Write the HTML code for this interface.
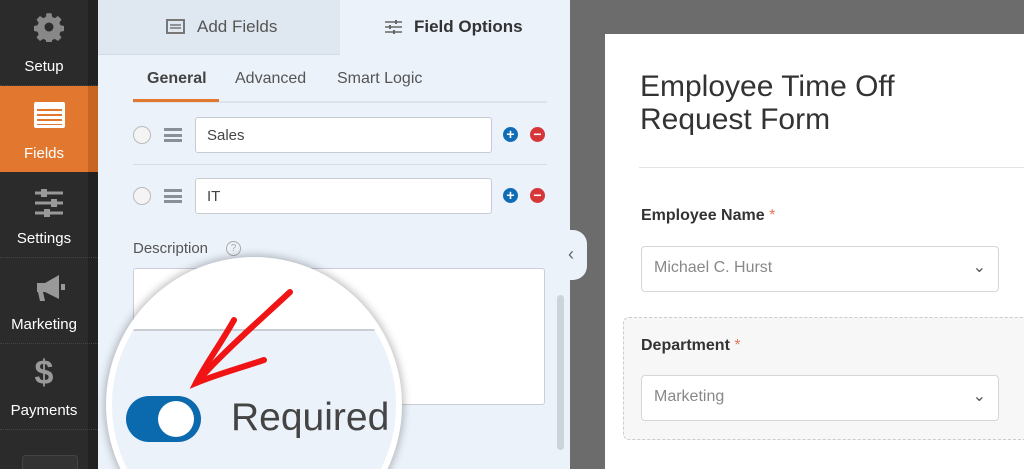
<!DOCTYPE html>
<html style="width:1024px;height:469px;overflow:hidden"><head><meta charset="utf-8"><style>
*{margin:0;padding:0;box-sizing:border-box}
body{width:1024px;height:469px;overflow:hidden;position:relative;background:#6c6c6c;font-family:"Liberation Sans","DejaVu Sans",sans-serif}
.abs{position:absolute}
.side{left:0;top:0;width:98px;height:469px;background:#2b2b2b;overflow:hidden}
.side .strip{position:absolute;left:88px;top:0;width:10px;height:469px;background:#222}
.item{position:absolute;left:0;width:98px;height:86px;border-bottom:1px dotted #444;color:#fff;font-size:15px;text-align:center}
.item span{position:absolute;left:0;right:10px;bottom:10px}
.panel{left:98px;top:0;width:472px;height:469px;background:#ebf2fa}
.tabA{left:98px;top:0;width:242px;height:55px;background:#dfe7f0;border-bottom:1px solid #d3dce6;color:#555;font-size:17px}
.tabB{left:340px;top:0;width:230px;height:55px;color:#333;font-size:17px;font-weight:bold}
.inp{background:#fff;border:1px solid #c7ccd1;border-radius:3px;font-size:15px;color:#444;padding-left:11px}
.radio{width:18px;height:18px;border-radius:50%;border:1px solid #bbb;background:#f4f4f4}
.ham{width:18px;height:14px;border-top:3px solid #8a9099;border-bottom:3px solid #8a9099}
.ham:after{content:"";position:absolute;left:0;right:0;top:2.5px;height:3px;background:#8a9099}
.pm{width:15px;height:15px;border-radius:50%;color:#fff;font-weight:bold;font-size:14px;line-height:14px;text-align:center}
.form{left:605px;top:34px;width:419px;height:435px;background:#fff;overflow:hidden}
.sel{border:1px solid #d6d6d6;border-radius:4px;background:#fff;color:#888;font-size:16px;padding:12px 0 0 12px}
</style></head><body>
<div class="abs side"><div class="strip"></div>
 <div class="item" style="top:0">
  <svg class="abs" style="left:34px;top:12px" width="30" height="30" viewBox="0 0 24 24"><path fill="#888" d="M12 8.5a3.5 3.5 0 1 0 0 7a3.5 3.5 0 1 0 0-7zM10 1h4l.6 3 2 .9 2.6-1.7 2.8 2.8-1.7 2.6.9 2 3 .6v4l-3 .6-.9 2 1.7 2.6-2.8 2.8-2.6-1.7-2 .9-.6 3h-4l-.6-3-2-.9-2.6 1.7-2.8-2.8 1.7-2.6-.9-2-3-.6v-4l3-.6.9-2-1.7-2.6 2.8-2.8 2.6 1.7 2-.9z"/><circle cx="12" cy="12" r="3.5" fill="#2b2b2b"/></svg>
  <span>Setup</span></div>
 <div class="item" style="top:86px;background:#e27730;border:0"><div class="abs" style="left:88px;top:0;width:10px;height:86px;background:#c96522"></div>
  <div class="abs" style="left:34px;top:16px;width:31px;height:26px;background:#fff;border-radius:2px"><div class="abs" style="left:3px;top:7px;width:25px;height:16px;background:repeating-linear-gradient(#e27730 0 2px,#fff 2px 5px)"></div></div>
  <span>Fields</span></div>
 <div class="item" style="top:172px">
  <svg class="abs" style="left:35px;top:16px" width="28" height="30" viewBox="0 0 28 30"><g stroke="#999" stroke-width="3"><path d="M0 5h28M0 15h28M0 25h28"/></g><g fill="#999"><rect x="6" y="1" width="6" height="8"/><rect x="16" y="11" width="6" height="8"/><rect x="9" y="21" width="6" height="8"/></g></svg>
  <span>Settings</span></div>
 <div class="item" style="top:258px">
  <svg class="abs" style="left:34px;top:14px" width="32" height="32" viewBox="0 0 32 32"><path fill="#999" d="M3 11h8l14-8v24l-14-7h-2l2 9h-5l-2-9H3z"/><rect x="27" y="12" width="4" height="6" fill="#999"/></svg>
  <span>Marketing</span></div>
 <div class="item" style="top:344px"><div class="abs" style="left:0;right:10px;top:10px;color:#999;font-size:34px;font-weight:bold">$</div><span>Payments</span></div>
 <div class="abs" style="left:22px;top:455px;width:56px;height:14px;border:1px solid #444;border-bottom:0;border-radius:4px 4px 0 0;background:#333"></div>
</div>
<div class="abs panel"></div>
<div class="abs tabA"><svg class="abs" style="left:68px;top:19px" width="19" height="15" viewBox="0 0 19 15"><rect x="1" y="1" width="17" height="13" fill="none" stroke="#777" stroke-width="2"/><path d="M4 6h11M4 9h11" stroke="#777" stroke-width="1.5"/></svg><div class="abs" style="left:99px;top:17px">Add Fields</div></div>
<div class="abs tabB"><svg class="abs" style="left:45px;top:20px" width="17" height="14" viewBox="0 0 17 14"><path d="M0 2h17M0 7h17M0 12h17" stroke="#666" stroke-width="1.5"/><path d="M11 0v4M5 5v4M9 10v4" stroke="#666" stroke-width="2"/></svg><div class="abs" style="left:74px;top:17px">Field Options</div></div>
<div class="abs" style="left:147px;top:70px;font-size:16px;color:#444;font-weight:bold">General</div>
<div class="abs" style="left:235px;top:70px;font-size:16px;color:#555">Advanced</div>
<div class="abs" style="left:337px;top:70px;font-size:16px;color:#555">Smart Logic</div>
<div class="abs" style="left:133px;top:101px;width:414px;height:2px;background:#dce3ea"></div>
<div class="abs" style="left:133px;top:99px;width:86px;height:3px;background:#e27730"></div>
<div class="abs radio" style="left:133px;top:126px"></div><div class="abs ham" style="left:164px;top:128px"></div>
<div class="abs inp" style="left:195px;top:117px;width:297px;height:36px;line-height:36px">Sales</div>
<div class="abs pm" style="left:503px;top:127px;background:#0f6db5">+</div><div class="abs pm" style="left:530px;top:127px;background:#d63638">−</div>
<div class="abs" style="left:133px;top:164px;width:414px;height:1px;background:#d7dee6"></div>
<div class="abs radio" style="left:133px;top:187px"></div><div class="abs ham" style="left:164px;top:189px"></div>
<div class="abs inp" style="left:195px;top:178px;width:297px;height:36px;line-height:36px">IT</div>
<div class="abs pm" style="left:503px;top:188px;background:#0f6db5">+</div><div class="abs pm" style="left:530px;top:188px;background:#d63638">−</div>
<div class="abs" style="left:133px;top:240px;font-size:15px;color:#555">Description</div>
<div class="abs" style="left:226px;top:241px;width:15px;height:15px;border:1px solid #aaa;border-radius:50%;font-size:10px;color:#aaa;text-align:center;line-height:13px">?</div>
<div class="abs" style="left:133px;top:268px;width:412px;height:137px;background:#fff;border:1px solid #ccd;border-radius:3px"></div>
<div class="abs" style="left:557px;top:295px;width:7px;height:155px;background:#ccd3db;border-radius:4px"></div>
<div class="abs" style="left:570px;top:0;width:454px;height:469px;background:#6c6c6c"></div>
<div class="abs" style="left:562px;top:230px;width:25px;height:50px;background:#ebf2fa;border-radius:0 14px 14px 0;color:#666;font-size:18px;line-height:48px;padding-left:6px">‹</div>
<div class="abs form">
 <div class="abs" style="left:35px;top:36px;font-size:30px;line-height:33px;color:#333">Employee Time Off<br>Request Form</div>
 <div class="abs" style="left:34px;top:133px;width:385px;height:1px;background:#e3e3e3"></div>
 <div class="abs" style="left:36px;top:173px;font-size:16px;font-weight:bold;color:#333">Employee Name <span style="color:#e27a5a;font-weight:normal">*</span></div>
 <div class="abs sel" style="left:36px;top:212px;width:358px;height:46px">Michael C. Hurst<span class="abs" style="right:12px;top:10px;color:#555">⌄</span></div>
 <div class="abs" style="left:18px;top:283px;width:401px;height:123px;background:#f7f7f7;border:1px dashed #ccc;border-right:0;border-radius:6px 0 0 6px"></div>
 <div class="abs" style="left:36px;top:303px;font-size:16px;font-weight:bold;color:#333">Department <span style="color:#e27a5a;font-weight:normal">*</span></div>
 <div class="abs sel" style="left:36px;top:341px;width:358px;height:46px">Marketing<span class="abs" style="right:12px;top:10px;color:#555">⌄</span></div>
</div>
<svg class="abs" style="left:0;top:0" width="1024" height="469" viewBox="0 0 1024 469">
 <defs>
  <filter id="sh" x="-10%" y="-10%" width="120%" height="120%"><feGaussianBlur stdDeviation="4"/></filter>
  <clipPath id="cc"><circle cx="254" cy="405" r="142"/></clipPath>
 </defs>
 <circle cx="254" cy="405" r="150" fill="rgba(0,0,0,.25)" filter="url(#sh)"/>
 <circle cx="254" cy="405" r="148" fill="#fff"/>
 <circle cx="254" cy="405" r="142" fill="#ebf2fa"/>
 <g clip-path="url(#cc)"><rect x="100" y="250" width="310" height="79" fill="#fff"/><rect x="100" y="329" width="310" height="2" fill="#c9ced4"/></g>
</svg>
<div class="abs" style="left:126px;top:396px;width:75px;height:46px;border-radius:23px;background:#0b69ad"></div>
<div class="abs" style="left:158px;top:401px;width:36px;height:36px;border-radius:50%;background:#fff"></div>
<div class="abs" style="left:231px;top:396px;font-size:39px;color:#444">Required</div>
<svg class="abs" style="left:0;top:0" width="1024" height="469"><g stroke="#f01414" stroke-width="6" stroke-linecap="round" fill="none"><path d="M290 292 C260 320 220 355 196 383"/><path d="M234 320 C220 345 205 365 196 383 C215 375 240 368 264 360"/></g></svg>
</body></html>
